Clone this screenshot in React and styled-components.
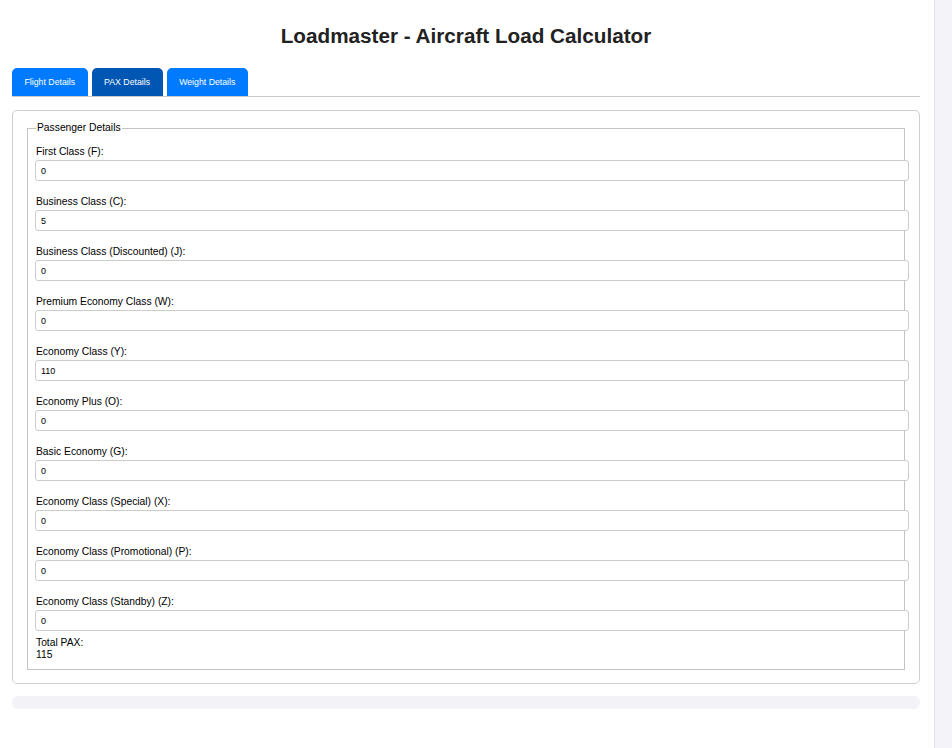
import React, { useState } from "react";
import styled, { createGlobalStyle } from "styled-components";

const GlobalStyle = createGlobalStyle`
  html, body {
    margin: 0;
    padding: 0;
    background: #ffffff;
    overflow: hidden;
  }
  body {
    font-family: "Liberation Sans", Arial, Helvetica, sans-serif;
    color: #000;
  }
  * { font-family: "Liberation Sans", Arial, Helvetica, sans-serif; }
`;

const Page = styled.div`
  display: flex;
  min-height: 100vh;
`;

const Main = styled.main`
  flex: 1;
  padding: 24px 14px 0 12px;
  min-width: 0;
`;

const ScrollTrack = styled.div`
  width: 17px;
  flex: 0 0 17px;
  background: #f4f3f9;
  border-left: 1px solid #e4e2ec;
`;

const Title = styled.h1`
  margin: 0 0 20px;
  text-align: center;
  font-size: 20.7px;
  line-height: 24px;
  font-weight: 700;
  color: #222;
`;

const TabBar = styled.div`
  display: flex;
  gap: 4px;
  border-bottom: 1px solid #c8c8c8;
`;

const Tab = styled.button`
  height: 28px;
  padding: 0 12.5px;
  border: none;
  border-radius: 5px 5px 0 0;
  background: ${(p) => (p.$active ? "#0056b3" : "#007bff")};
  color: #fff;
  font-size: 8.75px;
  cursor: pointer;
`;

const Card = styled.section`
  margin-top: 13px;
  border: 1px solid #cfcfcf;
  border-radius: 5px;
  padding: 11px 14px 13px;
`;

const Fieldset = styled.fieldset`
  margin: 0;
  border: 1px solid #c4c4c4;
  padding: 12px 7px 8px;
`;

const Legend = styled.legend`
  font-size: 10.3px;
  line-height: 12px;
  padding: 0 1px;
  margin-left: 1px;
  color: #000;
`;

const Fields = styled.div`
  display: grid;
  row-gap: 15px;
`;

const Group = styled.div`
  display: block;
`;

const Label = styled.label`
  display: block;
  font-size: 10.3px;
  line-height: 12px;
  margin: 0 0 2px 1px;
  color: #000;
`;

const Input = styled.input`
  display: block;
  box-sizing: content-box;
  width: 100%;
  height: 11px;
  padding: 4px 5px;
  border: 1px solid #cccccc;
  border-radius: 3px;
  background: #fff;
  font-size: 9px;
  color: #000;
  outline: none;
`;

const Total = styled.div`
  margin: 6px 0 0 1px;
  font-size: 10.3px;
  line-height: 12px;
  color: #000;
`;

const FooterBar = styled.div`
  margin-top: 12px;
  height: 13px;
  border-radius: 6px;
  background: #f3f3f7;
`;

const classes = [
  { key: "F", label: "First Class (F):", value: "0" },
  { key: "C", label: "Business Class (C):", value: "5" },
  { key: "J", label: "Business Class (Discounted) (J):", value: "0" },
  { key: "W", label: "Premium Economy Class (W):", value: "0" },
  { key: "Y", label: "Economy Class (Y):", value: "110" },
  { key: "O", label: "Economy Plus (O):", value: "0" },
  { key: "G", label: "Basic Economy (G):", value: "0" },
  { key: "X", label: "Economy Class (Special) (X):", value: "0" },
  { key: "P", label: "Economy Class (Promotional) (P):", value: "0" },
  { key: "Z", label: "Economy Class (Standby) (Z):", value: "0" },
];

export default function App() {
  const [values, setValues] = useState(
    Object.fromEntries(classes.map((c) => [c.key, c.value]))
  );
  const total = Object.values(values).reduce(
    (s, v) => s + (parseInt(v, 10) || 0),
    0
  );

  return (
    <>
      <GlobalStyle />
      <Page>
        <Main>
          <Title>Loadmaster - Aircraft Load Calculator</Title>
          <TabBar>
            <Tab>Flight Details</Tab>
            <Tab $active>PAX Details</Tab>
            <Tab>Weight Details</Tab>
          </TabBar>
          <Card>
            <Fieldset>
              <Legend>Passenger Details</Legend>
              <Fields>
                {classes.map((c) => (
                  <Group key={c.key}>
                    <Label htmlFor={`pax-${c.key}`}>{c.label}</Label>
                    <Input
                      id={`pax-${c.key}`}
                      type="text"
                      value={values[c.key]}
                      onChange={(e) =>
                        setValues({ ...values, [c.key]: e.target.value })
                      }
                    />
                  </Group>
                ))}
              </Fields>
              <Total>
                Total PAX:
                <br />
                {total}
              </Total>
            </Fieldset>
          </Card>
          <FooterBar />
        </Main>
        <ScrollTrack />
      </Page>
    </>
  );
}
